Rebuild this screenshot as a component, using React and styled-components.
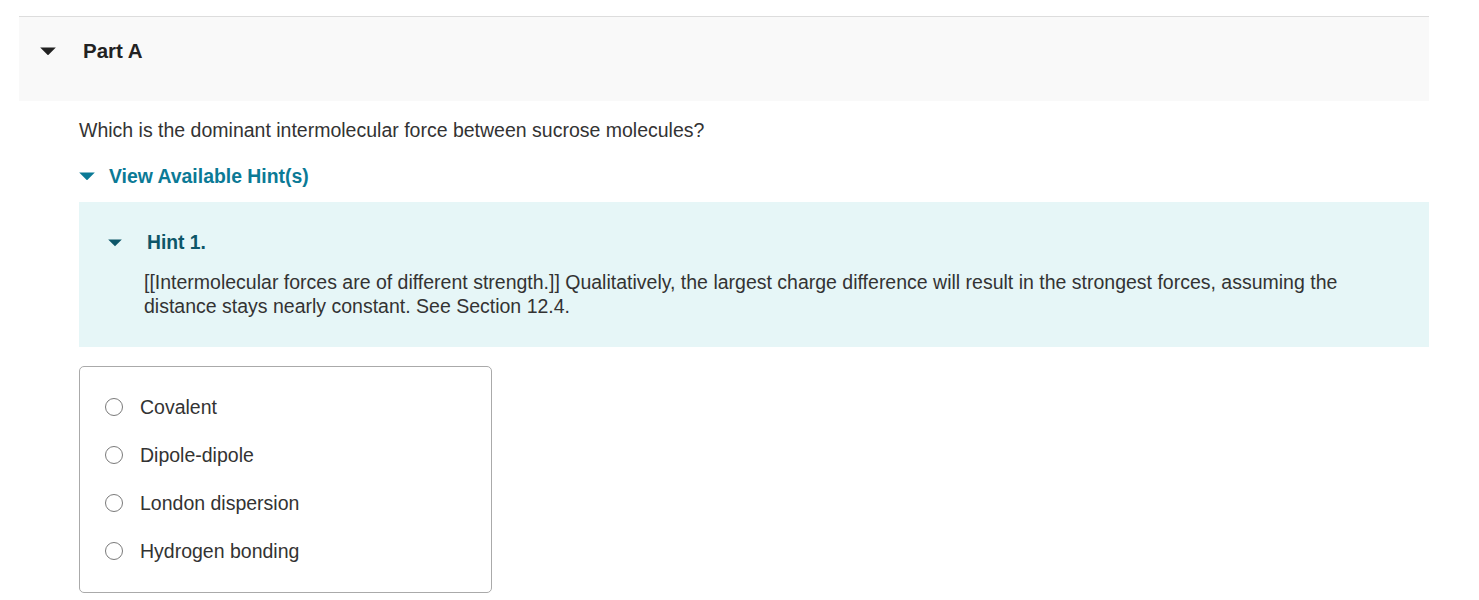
import React from "react";
import styled, { createGlobalStyle } from "styled-components";

const GlobalStyle = createGlobalStyle`
  body {
    margin: 0;
    background: #fff;
    font-family: "Liberation Sans", Arial, sans-serif;
    color: #333;
  }
`;

const Page = styled.div`
  padding: 16px 50px 0 19px;
`;

const PartHeader = styled.div`
  display: flex;
  align-items: center;
  height: 68px;
  padding: 0 0 16px 21px;
  border-top: 1px solid #ddd;
  background-color: #f9f9f9;
  gap: 27px;
`;

const PartTitle = styled.h2`
  margin: 0;
  font-size: 20.5px;
  font-weight: bold;
  color: #222;
`;

const Body = styled.div`
  padding: 17px 0 0 60px;
`;

const Question = styled.p`
  margin: 0;
  font-size: 19.5px;
  line-height: 24px;
`;

const HintToggle = styled.div`
  display: flex;
  align-items: center;
  gap: 14px;
  margin: 22px 0 0;
  height: 24px;
  font-size: 19.4px;
  font-weight: bold;
  color: #0b7a96;
`;

const HintBox = styled.div`
  margin-top: 14px;
  background-color: #e6f6f7;
  padding: 29px 60px 29px 29px;
`;

const HintHead = styled.div`
  display: flex;
  align-items: center;
  gap: 25px;
  height: 24px;
  font-size: 19.3px;
  font-weight: bold;
  color: #0d5669;
`;

const HintText = styled.p`
  margin: 15px 0 0 36px;
  font-size: 19.5px;
  line-height: 24px;
  color: #333;
`;

const Options = styled.div`
  margin-top: 19px;
  width: 411px;
  border: 1px solid #aaa;
  border-radius: 5px;
  padding: 16px 0 17px 0;
`;

const Option = styled.label`
  display: flex;
  align-items: center;
  gap: 17px;
  height: 48px;
  padding-left: 25px;
  font-size: 19.5px;
  color: #333;
`;

const Radio = styled.span`
  box-sizing: border-box;
  width: 18px;
  height: 18px;
  border: 1.5px solid #7a7a7a;
  border-radius: 50%;
  background: #fff;
  flex: none;
`;

const Caret = ({ size = 16, color = "#222" }) => (
  <svg width={size} height={size * 0.55} viewBox="0 0 16 9" style={{ flex: "none" }}>
    <path d="M0 0.5 L16 0.5 L8 8.5 Z" fill={color} />
  </svg>
);

const options = ["Covalent", "Dipole-dipole", "London dispersion", "Hydrogen bonding"];

export default function App() {
  return (
    <>
      <GlobalStyle />
      <Page>
        <PartHeader>
          <Caret size={16} color="#222" />
          <PartTitle>Part A</PartTitle>
        </PartHeader>
        <Body>
          <Question>Which is the dominant intermolecular force between sucrose molecules?</Question>
          <HintToggle>
            <Caret size={16} color="#0b7a96" />
            View Available Hint(s)
          </HintToggle>
          <HintBox>
            <HintHead>
              <Caret size={14} color="#0d5669" />
              Hint 1.
            </HintHead>
            <HintText>
              [[Intermolecular forces are of different strength.]] Qualitatively, the largest charge
              difference will result in the strongest forces, assuming the distance stays nearly
              constant. See Section 12.4.
            </HintText>
          </HintBox>
          <Options>
            {options.map((o) => (
              <Option key={o}>
                <Radio />
                {o}
              </Option>
            ))}
          </Options>
        </Body>
      </Page>
    </>
  );
}
